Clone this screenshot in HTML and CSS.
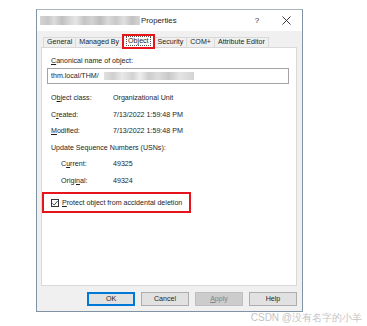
FILE: index.html
```html
<!DOCTYPE html>
<html lang="en">
<head>
  <meta charset="UTF-8">
  <title>Properties</title>
  <link rel="stylesheet" href="styles.css">
</head>
<body>

<div class="window">
  <!-- barra de título -->
  <div class="titlebar">
    <span class="blur blur-title"></span>
    <span class="title">Properties</span>
    <span class="spacer"></span>
    <span class="tbtn help-btn">?</span>
    <span class="tbtn close-btn">
      <svg width="9" height="9" viewBox="0 0 9 9"><path d="M0.5 0.5 L8.5 8.5 M8.5 0.5 L0.5 8.5" stroke="#222" stroke-width="0.9" fill="none"/></svg>
    </span>
  </div>

  <!-- abas -->
  <div class="tabs">
    <div class="tab">General</div>
    <div class="tab">Managed By</div>
    <div class="tab selected"><span class="focus">Object</span></div>
    <div class="tab">Security</div>
    <div class="tab">COM+</div>
    <div class="tab">Attribute Editor</div>
  </div>

  <div class="panel">
    <div class="label"><u>C</u>anonical name of object:</div>
    <div class="textbox">thm.local/THM/<span class="blur blur-value"></span></div>

    <div class="rows">
      <div class="row"><span class="key">O<u>b</u>ject class:</span><span>Organizational Unit</span></div>
      <div class="row"><span class="key">C<u>r</u>eated:</span><span>7/13/2022 1:59:48 PM</span></div>
      <div class="row"><span class="key"><u>M</u>odified:</span><span>7/13/2022 1:59:48 PM</span></div>
      <div class="row">Update Sequence Numbers (USNs):</div>
      <div class="row sub"><span class="key">C<u>u</u>rrent:</span><span>49325</span></div>
      <div class="row sub"><span class="key">Origi<u>n</u>al:</span><span>49324</span></div>
    </div>

    <div class="protect">
      <span class="checkbox">
        <svg width="8" height="8" viewBox="0 0 8 8"><path d="M1.3 4.2 L3.2 6 L6.8 1.8" stroke="#333" stroke-width="0.9" fill="none"/></svg>
      </span>
      <span><u>P</u>rotect object from accidental deletion</span>
    </div>
  </div>

  <div class="buttons">
    <button class="btn default">OK</button>
    <button class="btn">Cancel</button>
    <button class="btn disabled"><u>A</u>pply</button>
    <button class="btn">Help</button>
  </div>
</div>

<div class="watermark">CSDN @没有名字的小羊</div>

</body>
</html>
```

FILE: styles.css
```css
body {
  margin: 0;
  padding: 9px 0 0 0;
  background-color: #ffffff;
  font-family: 'Liberation Sans', Arial, sans-serif;
  font-size: 7.1px;
  color: #1e1e1e;
}
.window {
  box-sizing: border-box;
  width: 267px;
  height: 303px;
  margin-left: 36px;
  border: 1px solid #8193a5;
  border-top-color: #a9b4bf;
  background-color: #f0f0f0;
  display: flex;
  flex-direction: column;
}
.titlebar {
  height: 21px;
  background-color: #ffffff;
  display: flex;
  align-items: center;
  padding-left: 3px;
}
.title {
  font-size: 7.8px;
  margin-left: 1px;
}
.spacer {
  flex: 1;
}
.tbtn {
  display: flex;
  align-items: center;
  justify-content: center;
  height: 21px;
}
.help-btn {
  width: 28px;
  font-size: 8px;
}
.close-btn {
  width: 31px;
}
.blur {
  display: inline-block;
}
.blur-title {
  width: 100px;
  height: 9px;
  background: linear-gradient(90deg, #d4d4d4 0, #c6c6c6 8%, #dcdcdc 14%, #c0c0c0 22%, #d8d8d8 30%, #e6e6e6 36%, #c4c4c4 44%, #d2d2d2 52%, #bdbdbd 60%, #dadada 68%, #c8c8c8 76%, #e0e0e0 84%, #c2c2c2 92%, #d6d6d6 100%);
}
.blur-value {
  width: 90px;
  height: 8px;
  margin-left: 5px;
  vertical-align: middle;
  background: linear-gradient(90deg, #e2e2e2 0, #cfcfcf 10%, #e8e8e8 20%, #d2d2d2 32%, #eeeeee 40%, #cdcdcd 50%, #dddddd 60%, #c9c9c9 72%, #e4e4e4 84%, #d4d4d4 100%);
}
.tabs {
  height: 16px;
  display: flex;
  align-items: flex-end;
  padding-left: 6px;
}
.tab {
  box-sizing: border-box;
  height: 10px;
  line-height: 9px;
  padding: 0 3px;
  border: 1px solid #d9d9d9;
  border-bottom: none;
  margin-right: -1px;
  background-color: #f0f0f0;
  white-space: nowrap;
}
.tab.selected {
  position: relative;
  height: 13px;
  line-height: 11px;
  margin: 0 0 -1px 1px;
  padding: 0 2px;
  background-color: #ffffff;
  outline: 2px solid #e8141b;
  outline-offset: -1px;
  z-index: 1;
}
.focus {
  border: 1px dotted #555;
  padding: 0 1px;
}
.panel {
  flex: 1;
  margin: 0 5px 0 4px;
  background-color: #ffffff;
  border: 1px solid #d9d9d9;
  padding-top: 8px;
}
.label {
  line-height: 10px;
  padding-left: 9px;
}
.textbox {
  box-sizing: border-box;
  height: 16px;
  margin: 2px 7px 0 5px;
  border: 1px solid #a3a3a3;
  padding-left: 3px;
  line-height: 14px;
}
.rows {
  margin-top: 6px;
  padding-left: 9px;
}
.row {
  display: flex;
  line-height: 16.5px;
}
.key {
  width: 62px;
}
.row.sub {
  padding-left: 10px;
}
.row.sub .key {
  width: 52px;
}
.protect {
  box-sizing: border-box;
  width: 149px;
  height: 21px;
  margin-top: 3px;
  border: 2px solid #e8141b;
  display: flex;
  align-items: center;
  padding-left: 7px;
  gap: 3px;
}
.checkbox {
  box-sizing: border-box;
  width: 8px;
  height: 8px;
  border: 1px solid #333333;
  background-color: #ffffff;
  display: flex;
}
.checkbox svg {
  margin: -1px;
}
.buttons {
  display: flex;
  justify-content: flex-end;
  gap: 6px;
  padding: 6px 5px 5px 0;
}
.btn {
  box-sizing: border-box;
  width: 48px;
  height: 14px;
  padding: 0;
  font-family: 'Liberation Sans', Arial, sans-serif;
  font-size: 7.1px;
  color: #1e1e1e;
  background-color: #e1e1e1;
  border: 1px solid #adadad;
}
.btn.default {
  border: 1px solid #0078d7;
  box-shadow: inset 0 0 0 1px #0078d7;
}
.btn.disabled {
  background-color: #cccccc;
  border-color: #bfbfbf;
  color: #838383;
}
.watermark {
  text-align: right;
  padding-right: 5px;
  font-size: 10px;
  line-height: 12px;
  color: #c4c4c4;
}
```
